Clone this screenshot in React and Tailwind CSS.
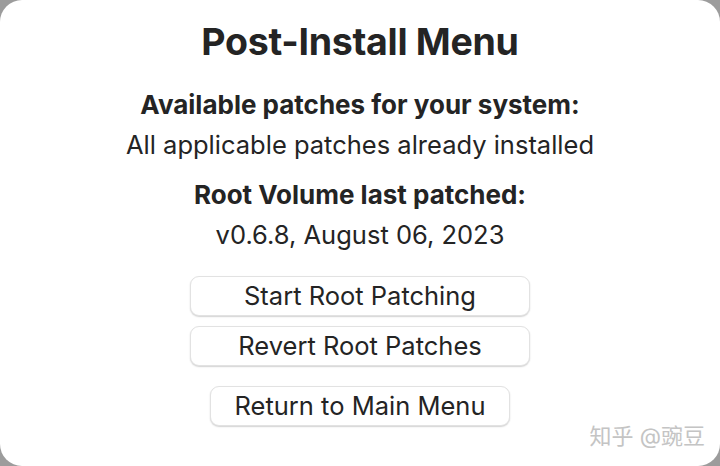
import React from 'react';

const Btn = ({ children, className = '' }) => (
    <button
        className={`h-[40px] rounded-[9px] bg-white text-[25.5px] leading-none text-[#242424] border border-[#e2e2e2] shadow-[0_1px_1.5px_rgba(0,0,0,0.18)] ${className}`}
    >
        {children}
    </button>
);

export default function App() {
    return (
        <div className="w-[720px] h-[466px] bg-[#9c9c9c] overflow-hidden">
            <div
                className="relative w-full h-full bg-white rounded-[22px] flex flex-col items-center text-[#242424]"
                style={{ fontFamily: 'Inter, "Noto Sans CJK SC", sans-serif' }}
            >
                <h1 className="mt-[21px] text-[37.5px] font-bold leading-[42px] tracking-[-0.3px]">
                    Post-Install Menu
                </h1>
                <p className="mt-[27px] text-[26px] font-bold leading-[30px]">
                    Available patches for your system:
                </p>
                <p className="mt-[10px] text-[25.5px] leading-[30px]">
                    All applicable patches already installed
                </p>
                <p className="mt-[20px] text-[26px] font-bold leading-[30px]">
                    Root Volume last patched:
                </p>
                <p className="mt-[10px] text-[25.5px] leading-[30px]">
                    v0.6.8, August 06, 2023
                </p>
                <div className="mt-[26px] flex flex-col gap-[10px]">
                    <Btn className="w-[340px]">Start Root Patching</Btn>
                    <Btn className="w-[340px]">Revert Root Patches</Btn>
                </div>
                <Btn className="mt-[20px] w-[300px]">Return to Main Menu</Btn>
                <span className="absolute right-[15px] bottom-[19px] text-[22px] leading-none text-[#c4c4c4]">
                    知乎 @豌豆
                </span>
            </div>
        </div>
    );
}
